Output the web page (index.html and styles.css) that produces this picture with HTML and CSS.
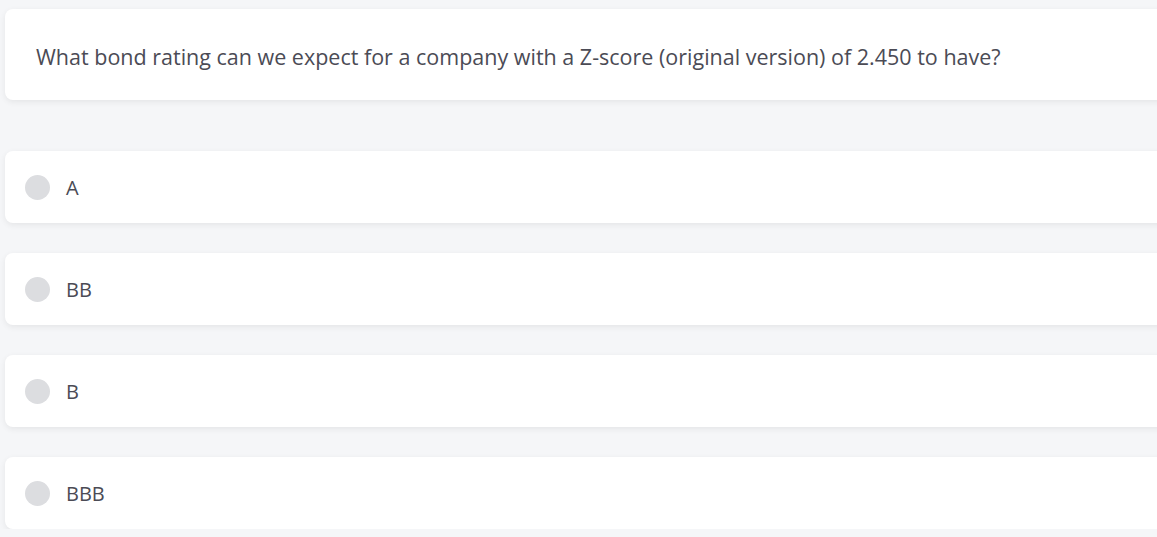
FILE: index.html
```html
<!DOCTYPE html>
<html>
<head>
<meta charset="utf-8">
<link rel="stylesheet" href="styles.css">
</head>
<body>
<div class="page">
  <div class="card question">
    <p class="qtext">What bond rating can we expect for a company with a Z-score (original version) of 2.450 to have?</p>
  </div>
  <div class="options">
    <div class="card option"><span class="radio"></span><span class="label">A</span></div>
    <div class="card option"><span class="radio"></span><span class="label">BB</span></div>
    <div class="card option"><span class="radio"></span><span class="label">B</span></div>
    <div class="card option"><span class="radio"></span><span class="label">BBB</span></div>
  </div>
</div>
</body>
</html>
```
FILE: styles.css
```css
html, body {
  margin: 0;
  padding: 0;
  background: #f5f6f8;
  overflow: hidden;
}
body {
  font-family: "Open Sans", "Noto Sans", "Liberation Sans", sans-serif;
  color: #4b4b55;
}
.page {
  width: 1200px;
  padding: 9px 0 0 5px;
}
.card {
  background: #ffffff;
  border-radius: 8px;
  box-shadow: 0 2px 6px rgba(0, 0, 0, 0.07);
}
.question {
  height: 91px;
  display: flex;
  align-items: center;
  padding-left: 31px;
  padding-top: 3px;
  box-sizing: border-box;
}
.qtext {
  margin: 0;
  font-size: 21.5px;
}
.options {
  margin-top: 51px;
  display: flex;
  flex-direction: column;
  gap: 30px;
}
.option {
  height: 72px;
  display: flex;
  align-items: center;
  padding-left: 20px;
  box-sizing: border-box;
}
.radio {
  width: 25px;
  height: 25px;
  border-radius: 50%;
  background: #dcdde0;
  flex: none;
}
.label {
  margin-left: 16px;
  font-size: 20px;
}
```
